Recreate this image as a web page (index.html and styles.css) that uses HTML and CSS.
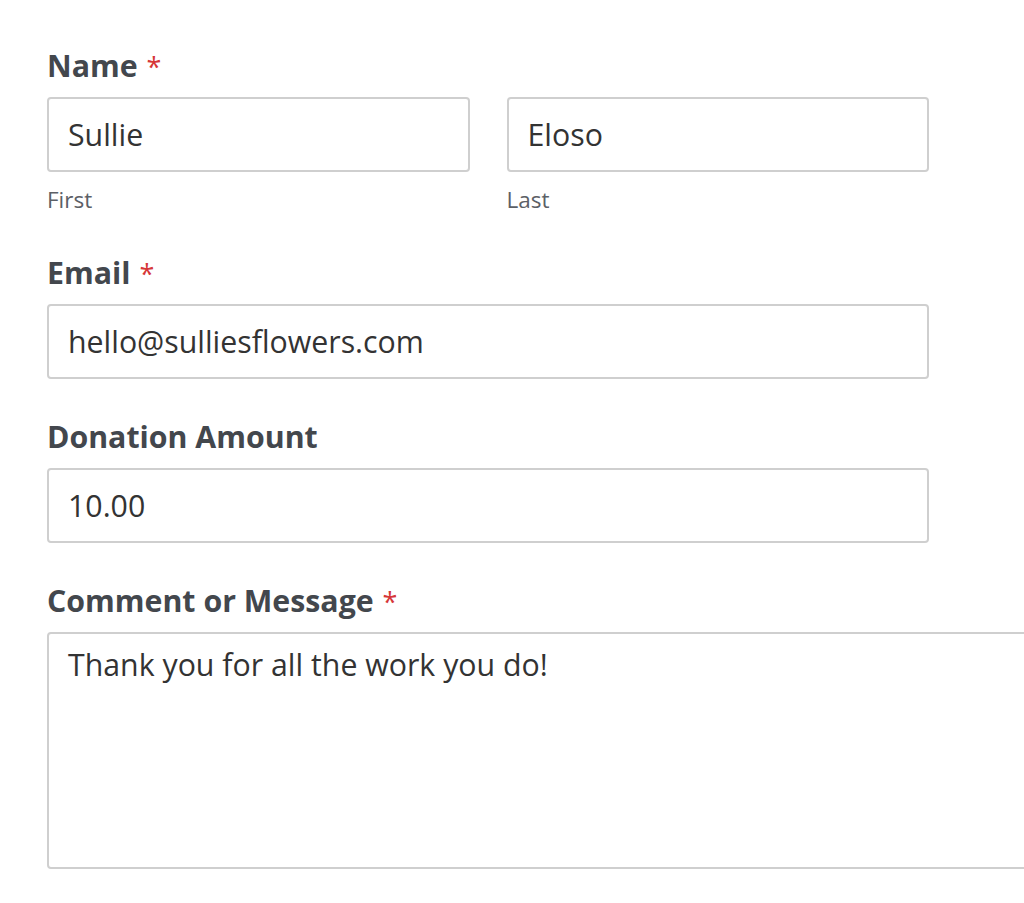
FILE: index.html
```html
<!DOCTYPE html>
<html lang="en">
<head>
<meta charset="utf-8">
<title>Donation Form</title>
<link rel="stylesheet" href="styles.css">
</head>
<body>
<form class="form">
  <div class="field">
    <label class="label">Name <span class="req">*</span></label>
    <div class="row">
      <div class="col">
        <input class="input" type="text" value="Sullie">
        <div class="sublabel">First</div>
      </div>
      <div class="col">
        <input class="input" type="text" value="Eloso">
        <div class="sublabel">Last</div>
      </div>
    </div>
  </div>
  <div class="field">
    <label class="label">Email <span class="req">*</span></label>
    <input class="input" type="text" value="hello@sulliesflowers.com">
  </div>
  <div class="field">
    <label class="label">Donation Amount</label>
    <input class="input" type="text" value="10.00">
  </div>
  <div class="field">
    <label class="label">Comment or Message <span class="req">*</span></label>
    <textarea class="textarea">Thank you for all the work you do!</textarea>
  </div>
</form>
</body>
</html>
```

FILE: styles.css
```css
html, body {
  margin: 0;
  padding: 0;
  overflow: hidden;
  background: #ffffff;
}

.form {
  padding: 48px 0 0 47px;
  width: 882px;
  font-family: "Open Sans", "Noto Sans", sans-serif;
}

.field {
  margin-bottom: 40px;
}

.label {
  display: block;
  height: 36px;
  font-size: 30.3px;
  line-height: 36px;
  font-weight: 700;
  color: #43474d;
  margin-bottom: 13px;
  white-space: nowrap;
}

.req {
  color: #d63638;
  font-weight: 400;
  font-size: 27px;
  line-height: 1;
  margin-left: 1px;
}

.row {
  display: grid;
  grid-template-columns: 1fr 1fr;
  column-gap: 37px;
}

.col {
  min-width: 0;
}

.input,
.textarea {
  display: block;
  box-sizing: border-box;
  width: 100%;
  border: 2px solid #cfcfcf;
  border-radius: 4px;
  background: #ffffff;
  font-family: "Open Sans", "Noto Sans", sans-serif;
  font-size: 30.3px;
  color: #333333;
  margin: 0;
  outline: none;
}

.input {
  height: 75px;
  padding: 0 19px;
}

.textarea {
  width: 1000px;
  height: 237px;
  padding: 10px 19px;
  line-height: 1.4;
  resize: none;
  overflow: hidden;
}

.sublabel {
  margin-top: 12px;
  font-size: 22.5px;
  line-height: 31px;
  color: #5c6066;
}
```
